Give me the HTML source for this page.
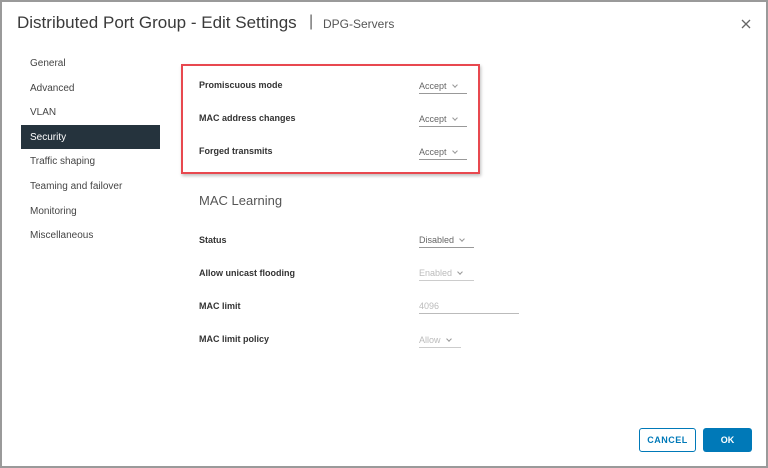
<!DOCTYPE html>
<html><head><style>
*{margin:0;padding:0;box-sizing:border-box}
body{width:768px;height:468px;background:#fff;font-family:"Liberation Sans",sans-serif;position:relative;overflow:hidden;color:#333}
.frame{position:absolute;left:0;top:0;width:768px;height:468px;border:2px solid #9a9a9a}
.t{position:absolute;white-space:nowrap}
.nav{position:absolute;left:30px;font-size:10px;color:#444}
.lbl{position:absolute;left:199px;font-size:9px;font-weight:bold;color:#333}
.sel{position:absolute;font-size:9px;color:#666;border-bottom:1px solid #999;padding-bottom:2px}
.sel.dis{color:#bbb;border-color:#ccc}
.chev{display:inline-block;width:4px;height:4px;border-right:1px solid #999;border-bottom:1px solid #999;transform:rotate(45deg);margin-left:6px;position:relative;top:-2px}
</style></head><body>
<div class="frame"></div>
<div class="t" style="left:17px;top:13px;font-size:17px;color:#3a3a3a">Distributed Port Group - Edit Settings</div>
<div class="t" style="left:309px;top:13px;font-size:16px;color:#666">|</div>
<div class="t" style="left:323px;top:17px;font-size:12px;color:#555">DPG-Servers</div>
<svg style="position:absolute;left:741px;top:19px" width="10" height="10"><path d="M1 1L9 9M9 1L1 9" stroke="#666" stroke-width="1.3"/></svg>
<div class="nav" style="top:58px">General</div>
<div class="nav" style="top:83px">Advanced</div>
<div class="nav" style="top:107px">VLAN</div>
<div style="position:absolute;left:21px;top:125px;width:139px;height:24px;background:#25333d"></div>
<div class="nav" style="top:132px;color:#fff">Security</div>
<div class="nav" style="top:156px">Traffic shaping</div>
<div class="nav" style="top:181px">Teaming and failover</div>
<div class="nav" style="top:206px">Monitoring</div>
<div class="nav" style="top:230px">Miscellaneous</div>
<div style="position:absolute;left:181px;top:64px;width:299px;height:110px;border:2px solid #e8484f;box-shadow:1px 2px 3px rgba(0,0,0,.25)"></div>
<div class="lbl" style="top:80px">Promiscuous mode</div>
<div class="sel" style="left:419px;top:81px;width:48px">Accept<span class="chev"></span></div>
<div class="lbl" style="top:113px">MAC address changes</div>
<div class="sel" style="left:419px;top:114px;width:48px">Accept<span class="chev"></span></div>
<div class="lbl" style="top:146px">Forged transmits</div>
<div class="sel" style="left:419px;top:147px;width:48px">Accept<span class="chev"></span></div>
<div class="t" style="left:199px;top:193px;font-size:13px;color:#555">MAC Learning</div>
<div class="lbl" style="top:235px">Status</div>
<div class="sel" style="left:419px;top:235px;width:55px">Disabled<span class="chev"></span></div>
<div class="lbl" style="top:268px">Allow unicast flooding</div>
<div class="sel dis" style="left:419px;top:268px;width:55px">Enabled<span class="chev"></span></div>
<div class="lbl" style="top:301px">MAC limit</div>
<div class="sel dis" style="left:419px;top:301px;width:100px;border-color:#bbb">4096</div>
<div class="lbl" style="top:334px">MAC limit policy</div>
<div class="sel dis" style="left:419px;top:335px;width:42px">Allow<span class="chev"></span></div>
<div style="position:absolute;left:639px;top:428px;width:57px;height:24px;border:1px solid #0079b8;border-radius:3px;color:#0079b8;font-size:9px;font-weight:bold;text-align:center;line-height:22px;letter-spacing:.5px">CANCEL</div>
<div style="position:absolute;left:703px;top:428px;width:49px;height:24px;background:#0079b8;border-radius:3px;color:#fff;font-size:9px;font-weight:bold;text-align:center;line-height:24px">OK</div>
</body></html>
